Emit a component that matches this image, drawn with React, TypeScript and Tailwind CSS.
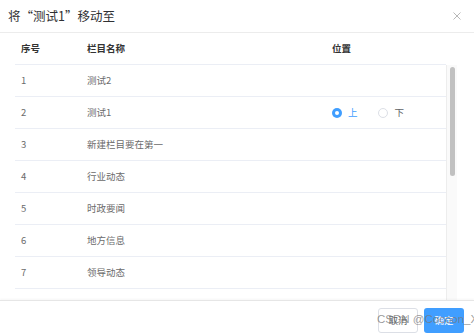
import React from "react";

const rows = [
  { n: "1", name: "测试2" },
  { n: "2", name: "测试1", radio: true },
  { n: "3", name: "新建栏目要在第一" },
  { n: "4", name: "行业动态" },
  { n: "5", name: "时政要闻" },
  { n: "6", name: "地方信息" },
  { n: "7", name: "领导动态" },
];

const font = { fontFamily: '"Noto Sans CJK SC", "Noto Sans", sans-serif' };

export default function App() {
  return (
    <div className="relative w-[474px] h-[336px] bg-white overflow-hidden flex flex-col" style={font}>
      {/* header */}
      <div className="h-[33px] shrink-0 flex items-center justify-between pl-[8px] pr-[13px] border-b border-[#ececec]">
        <span className="text-[12.5px] text-[#303133] leading-none">将“测试1”移动至</span>
        <svg width="8" height="8" viewBox="0 0 8 8" className="text-[#b0b0b0]">
          <path d="M0.5 0.5 L7.5 7.5 M7.5 0.5 L0.5 7.5" stroke="currentColor" strokeWidth="0.9" />
        </svg>
      </div>
      {/* body */}
      <div className="flex-1 flex pl-[15px] pr-[17px] min-h-0">
        <div className="flex-1 flex flex-col min-w-0">
          <div className="h-[32px] shrink-0 flex items-center border-b border-[#ebeef5] text-[9.5px] font-bold text-[#333]">
            <div className="w-[72px] pl-[6px]">序号</div>
            <div className="w-[245px]">栏目名称</div>
            <div>位置</div>
          </div>
          {rows.map((r) => (
            <div key={r.n} className="h-[32px] shrink-0 flex items-center border-b border-[#ebeef5] text-[9.5px] text-[#6b6b6b]">
              <div className="w-[72px] pl-[6px]">{r.n}</div>
              <div className="w-[245px]">{r.name}</div>
              {r.radio && (
                <div className="flex items-center">
                  <span className="w-[10px] h-[10px] rounded-full bg-[#409eff] flex items-center justify-center">
                    <span className="w-[4px] h-[4px] rounded-full bg-white" />
                  </span>
                  <span className="ml-[6px] text-[#409eff]">上</span>
                  <span className="ml-[20px] w-[10px] h-[10px] rounded-full border border-[#dcdfe6] bg-white" />
                  <span className="ml-[7px] text-[#606266]">下</span>
                </div>
              )}
            </div>
          ))}
        </div>
        <div className="w-[11px] shrink-0 mt-[32px] border-l border-[#ededed] bg-[#fafafa] pt-[2px] pl-[3px]">
          <div className="w-[5px] h-[109px] rounded-[3px] bg-[#c1c1c1]" />
        </div>
      </div>
      {/* footer */}
      <div className="h-[36px] shrink-0 border-t border-[#e6e6e6] shadow-[0_-1px_2px_rgba(0,0,0,0.04)] flex justify-end items-start pt-[7px] pr-[10px] gap-[6px]">
        <button className="w-[40px] h-[25px] rounded-[3px] border border-[#dcdfe6] bg-white text-[9.5px] text-[#606266] flex items-center justify-center" style={font}>
          取消
        </button>
        <button className="w-[40px] h-[25px] rounded-[3px] bg-[#409eff] text-[9.5px] text-white flex items-center justify-center" style={font}>
          确定
        </button>
      </div>
      <div
        className="absolute left-[377px] top-[314px] text-[11.5px] leading-none text-[rgba(120,120,120,0.75)] whitespace-nowrap"
        style={{ fontFamily: '"Liberation Sans", Arial, sans-serif' }}
      >
        CSDN @Cocoon_Xu
      </div>
    </div>
  );
}
